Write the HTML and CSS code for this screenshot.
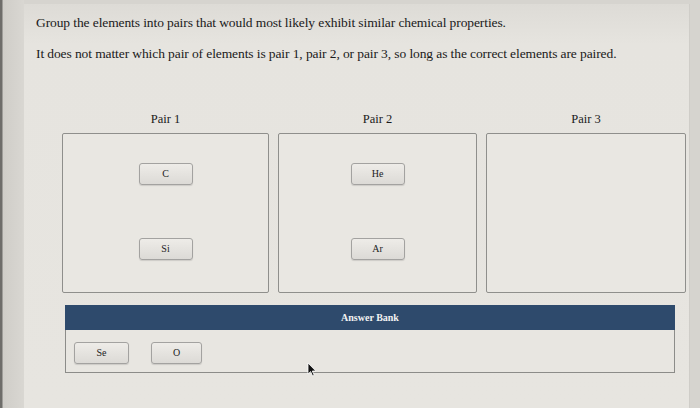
FILE: index.html
```html
<!DOCTYPE html>
<html>
<head>
<meta charset="utf-8">
<link rel="stylesheet" href="styles.css">
</head>
<body>
<div class="screen">
  <div class="edge"></div>
  <div class="page">
    <p class="q q1">Group the elements into pairs that would most likely exhibit similar chemical properties.</p>
    <p class="q q2">It does not matter which pair of elements is pair 1, pair 2, or pair 3, so long as the correct elements are paired.</p>

    <div class="pairs">
      <div class="pair">
        <div class="label">Pair 1</div>
        <div class="box">
          <div class="chip">C</div>
          <div class="chip">Si</div>
        </div>
      </div>
      <div class="pair">
        <div class="label">Pair 2</div>
        <div class="box">
          <div class="chip">He</div>
          <div class="chip">Ar</div>
        </div>
      </div>
      <div class="pair">
        <div class="label">Pair 3</div>
        <div class="box"></div>
      </div>
    </div>

    <div class="bank">
      <div class="bank-head">Answer Bank</div>
      <div class="bank-body">
        <div class="chip chip-se">Se</div>
        <div class="chip chip-o">O</div>
      </div>
    </div>

    <svg class="cursor" width="10" height="15" viewBox="0 0 10 15">
      <path d="M1 1 L1 12 L3.6 9.6 L5.6 14 L7.2 13.3 L5.3 9 L8.8 9 Z" fill="#111" stroke="#fff" stroke-width="0.8"/>
    </svg>
  </div>
</div>
</body>
</html>
```

FILE: styles.css
```css
html, body {
  margin: 0;
  padding: 0;
}
body {
  width: 700px;
  height: 408px;
  overflow: hidden;
  background: #d6d4cf;
  font-family: "Liberation Serif", "Times New Roman", serif;
  color: #1a1a1a;
}
.screen {
  display: flex;
  height: 408px;
}
.edge {
  width: 24px;
  flex: none;
  background: linear-gradient(to right, #6e6d6a 0, #6e6d6a 2px, #cfcdc8 3px, #d9d7d2 24px);
}
.page {
  position: relative;
  flex: 1;
  margin-top: 4px;
  margin-right: 10px;
  background: linear-gradient(to bottom, #dddbd6 0, #e6e4df 40px, #e7e5e0 100%);
  padding: 10px 0 0 12px;
  border-right: 1px solid #cfcdc8;
}
.q {
  margin: 0;
  font-size: 13.5px;
  letter-spacing: -0.1px;
  white-space: nowrap;
}
.q1 {
  line-height: 18px;
}
.q2 {
  margin-top: 13px;
  line-height: 18px;
}
.pairs {
  display: grid;
  grid-template-columns: 207px 199px 200px;
  column-gap: 9px;
  margin-top: 47px;
  margin-left: 26px;
}
.label {
  text-align: center;
  font-size: 12.5px;
  height: 18px;
  line-height: 18px;
  margin-bottom: 5px;
}
.box {
  height: 160px;
  border: 1.5px solid #8f8f8c;
  border-radius: 2px;
  background: #e9e7e2;
  display: flex;
  flex-direction: column;
  align-items: center;
  padding-top: 29px;
  box-sizing: border-box;
  row-gap: 53px;
}
.chip {
  width: 54px;
  height: 22px;
  box-sizing: border-box;
  border: 1px solid #a3a2a0;
  border-radius: 3px;
  background: linear-gradient(to bottom, #eeece8, #dcdad6);
  box-shadow: 0 1px 1px rgba(0,0,0,0.12);
  font-size: 10px;
  line-height: 20px;
  text-align: center;
  color: #222;
}
.bank {
  margin-top: 12px;
  margin-left: 29px;
  width: 610px;
}
.bank-head {
  height: 25px;
  background: #2e4a6c;
  color: #f2f2f2;
  font-weight: bold;
  font-size: 10px;
  line-height: 25px;
  text-align: center;
}
.bank-body {
  height: 43px;
  box-sizing: border-box;
  border: 1px solid #8c8c89;
  border-top: none;
  background: #e8e6e1;
  display: flex;
  align-items: flex-start;
  padding: 12px 0 0 8px;
  column-gap: 22px;
}
.chip-se {
  width: 55px;
}
.chip-o {
  width: 51px;
}
.cursor {
  position: absolute;
  left: 283px;
  top: 358px;
}
```
